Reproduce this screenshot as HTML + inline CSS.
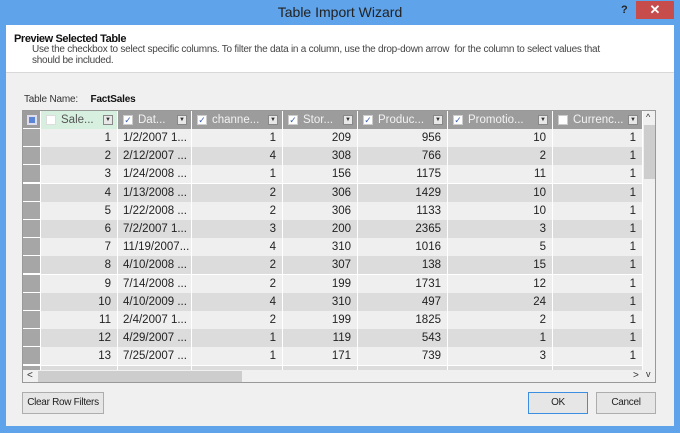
<!DOCTYPE html><html><head><style>
*{box-sizing:border-box;margin:0;padding:0}
body{width:680px;height:433px;background:#5fa3ea;font-family:"Liberation Sans",sans-serif;position:relative;overflow:hidden}
.title{position:absolute;left:0;top:0;width:680px;height:25px;text-align:center;font-size:14px;line-height:25px;color:#222}
.help{position:absolute;left:621px;top:4px;font-size:11px;font-weight:bold;color:#222}
.close{position:absolute;left:636px;top:1px;width:38px;height:18px;background:#c74c4c;color:#fff;text-align:center;font-size:13px;font-weight:bold;line-height:18px}
.client{position:absolute;left:6px;top:25px;width:668px;height:401px;background:#f0f0f0}
.head{position:absolute;left:0;top:0;width:668px;height:48px;background:#fff;border-bottom:1px solid #d8d8d8}
.h1{position:absolute;left:8px;top:8px;font-size:11px;font-weight:bold;color:#111;letter-spacing:-0.4px}
.h2{position:absolute;left:26px;top:19px;font-size:10px;color:#444;line-height:11px;width:640px;letter-spacing:-0.25px}
.tn{position:absolute;left:18px;top:69px;font-size:10px;color:#333;letter-spacing:-0.2px}
.tn b{margin-left:10px;color:#111}
.grid{position:absolute;left:16px;top:85px;width:634px;height:273px;background:#fff;border:1px solid #999;overflow:hidden}
.row{position:absolute;left:0;height:18px;display:flex;width:620px}
.c{height:100%;border-right:1px solid #fff;font-size:11.5px;line-height:18px;text-align:right;padding-right:6px;color:#222;white-space:nowrap;overflow:hidden}
.rh{width:18px;background:#a6a6a6;border-right:1px solid #fff;border-bottom:1px solid #fff}
.hdr .c{background:#9c9c9c;color:#f2f2f2;text-align:left;padding-left:20px;position:relative}
.cb{position:absolute;left:5px;top:4px;width:10px;height:10px;border:1px solid #ccc;background:#fff;font-size:9px;line-height:8px;color:#3a5fb0;text-align:center}
.dd{position:absolute;right:4px;top:4px;width:10px;height:10px;background:#e8e8e8;border:1px solid #888;font-size:6px;line-height:8px;text-align:center;color:#333}
.btn{position:absolute;top:367px;height:22px;border:1px solid #adadad;background:#e6e6e6;font-size:10px;line-height:20px;text-align:center;color:#222;white-space:nowrap;letter-spacing:-0.3px}
</style></head><body>
<div class="title">Table Import Wizard</div>
<div class="help">?</div><div class="close">✕</div>
<div class="client">
<div class="head"><div class="h1">Preview Selected Table</div>
<div class="h2">Use the checkbox to select specific columns. To filter the data in a column, use the drop-down arrow&nbsp; for the column to select values that<br>should be included.</div></div>
<div class="tn">Table Name: <b>FactSales</b></div>
<div class="grid">
<div class="row hdr" style="top:0">
<div class="rh" style="background:#9c9c9c;position:relative"><span style="position:absolute;left:4px;top:4px;width:10px;height:10px;background:#5b86d6;border:2px solid #dde"></span></div>
<div class="c" style="width:77px;background:#d6efdf;color:#555"><span class="cb" style="border-color:#ddd"></span>Sale...<span class="dd">▼</span></div>
<div class="c" style="width:74px"><span class="cb">✓</span>Dat...<span class="dd">▼</span></div>
<div class="c" style="width:91px"><span class="cb">✓</span>channe...<span class="dd">▼</span></div>
<div class="c" style="width:75px"><span class="cb">✓</span>Stor...<span class="dd">▼</span></div>
<div class="c" style="width:90px"><span class="cb">✓</span>Produc...<span class="dd">▼</span></div>
<div class="c" style="width:105px"><span class="cb">✓</span>Promotio...<span class="dd">▼</span></div>
<div class="c" style="width:90px"><span class="cb"></span>Currenc...<span class="dd">▼</span></div>
</div>
<div id="rows"></div>
<div style="position:absolute;left:620px;top:0;width:14px;height:273px;background:#f0f0f0"></div>
<div style="position:absolute;left:623px;top:1px;font-size:9px;color:#333">^</div>
<div style="position:absolute;left:621px;top:14px;width:12px;height:54px;background:#cdcdcd"></div>
<div style="position:absolute;left:623px;top:258px;font-size:9px;color:#333">v</div>
<div style="position:absolute;left:0;top:259px;width:620px;height:14px;background:#f0f0f0"></div>
<div style="position:absolute;left:4px;top:259px;font-size:10px;color:#333">&lt;</div>
<div style="position:absolute;left:15px;top:260px;width:204px;height:12px;background:#cdcdcd"></div>
<div style="position:absolute;left:610px;top:259px;font-size:10px;color:#333">&gt;</div>
</div>
<div class="btn" style="left:16px;width:82px">Clear Row Filters</div>
<div class="btn" style="left:522px;width:60px;border-color:#3c8fe0">OK</div>
<div class="btn" style="left:590px;width:60px">Cancel</div>
</div>
<script>
var d=[[1,"1/2/2007 1...",1,209,956,10,1],[2,"2/12/2007 ...",4,308,766,2,1],[3,"1/24/2008 ...",1,156,1175,11,1],[4,"1/13/2008 ...",2,306,1429,10,1],[5,"1/22/2008 ...",2,306,1133,10,1],[6,"7/2/2007 1...",3,200,2365,3,1],[7,"11/19/2007...",4,310,1016,5,1],[8,"4/10/2008 ...",2,307,138,15,1],[9,"7/14/2008 ...",2,199,1731,12,1],[10,"4/10/2009 ...",4,310,497,24,1],[11,"2/4/2007 1...",2,199,1825,2,1],[12,"4/29/2007 ...",1,119,543,1,1],[13,"7/25/2007 ...",1,171,739,3,1],["","","","","","",""]];
var w=[77,74,91,75,90,105,90],h="";
d.forEach(function(r,i){var bg=i%2?"#dcdcdc":"#efefef";h+='<div class="row" style="top:'+(18+i*18.2)+'px"><div class="rh"></div>';r.forEach(function(v,j){h+='<div class="c" style="width:'+w[j]+'px;background:'+bg+(j==1?';text-align:left;padding-left:5px':'')+'">'+v+'</div>'});h+='</div>'});
document.getElementById("rows").innerHTML=h;
</script>
</body></html>
